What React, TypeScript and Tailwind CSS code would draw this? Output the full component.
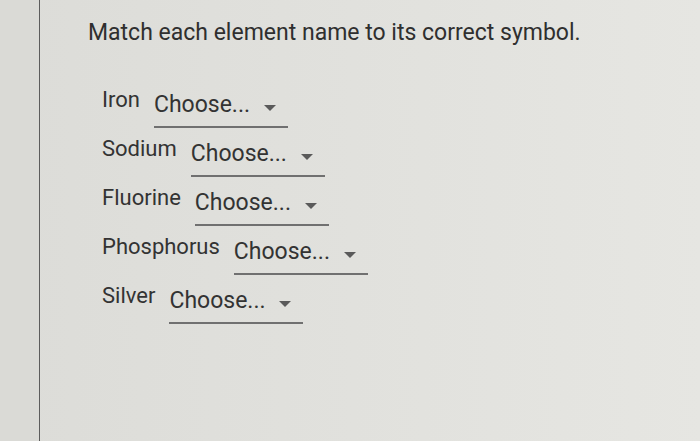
import React from "react";

// Elements listed in the matching question
const ELEMENTS = ["Iron", "Sodium", "Fluorine", "Phosphorus", "Silver"];

function ChooseSelect() {
  return (
    <div className="mt-[4px] flex h-[37px] w-[134px] items-start border-b-2 border-[#707070]">
      <span className="text-[23px] leading-[28px] text-[#333333]">Choose...</span>
      <svg className="ml-auto mr-[12px] mt-[14px]" width="12" height="6" viewBox="0 0 12 6">
        <path d="M0 0 L12 0 L6 6 Z" fill="#5a5a5a" />
      </svg>
    </div>
  );
}

export default function App() {
  return (
    <div
      className="flex h-[441px] w-[700px] overflow-hidden bg-gradient-to-r from-[#dcdcd8] via-[#e1e1dd] to-[#e6e6e2] text-[#333333]"
      style={{ fontFamily: "Roboto, 'Liberation Sans', sans-serif" }}
    >
      {/* left gutter */}
      <div className="h-full w-[40px] shrink-0 border-r border-[#5c5c5c] bg-[#dadad6]" />
      <div className="flex-1 pl-[48px] pt-[18px]">
        <h1 className="text-[23px] leading-[30px] text-[#2f2f2f]">
          Match each element name to its correct symbol.
        </h1>
        <div className="mt-[39px] pl-[14px]">
          {ELEMENTS.map((name) => (
            <div key={name} className="flex h-[49px] items-start gap-[14px]">
              <span className="text-[22px] leading-[26px]">{name}</span>
              <ChooseSelect />
            </div>
          ))}
        </div>
      </div>
    </div>
  );
}
